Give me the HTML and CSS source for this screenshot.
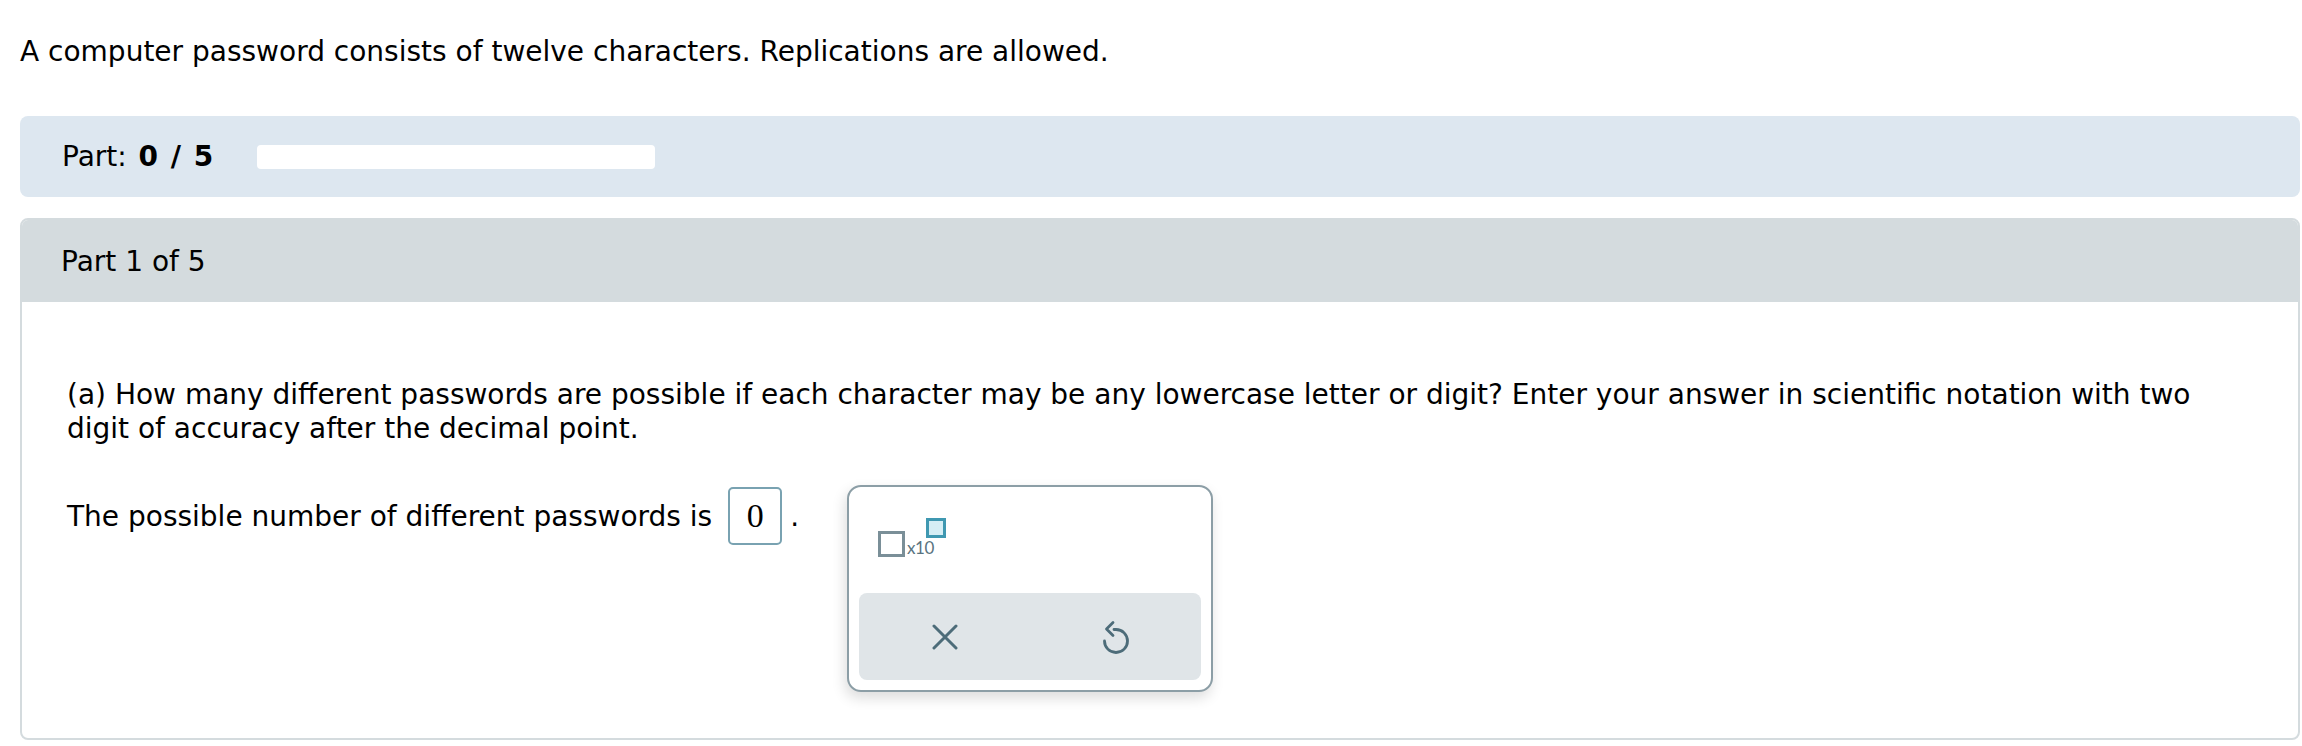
FILE: index.html
```html
<!DOCTYPE html>
<html>
<head>
<meta charset="utf-8">
<link rel="stylesheet" href="styles.css">
</head>
<body>
<div class="page">
  <p class="intro">A computer password consists of twelve characters. Replications are allowed.</p>
  <div class="progress">
    <span class="progress-label">Part: <b>0 / 5</b></span>
    <div class="progress-bar"></div>
  </div>
  <div class="panel">
    <div class="panel-head">Part 1 of 5</div>
    <div class="panel-body">
      <p class="question">(a) How many different passwords are possible if each character may be any lowercase letter or digit? Enter your answer in scientific notation with two digit of accuracy after the decimal point.</p>
      <div class="answer-row">
        <div class="answer-line">
          <span>The possible number of different passwords is</span>
          <span class="answer-box">0</span>
          <span class="period">.</span>
        </div>
        <div class="keypad">
          <div class="keypad-top">
            <span class="sci">
              <span class="sq-big"></span>
              <span class="x10">x10</span>
              <span class="sq-small"></span>
            </span>
          </div>
          <div class="keypad-actions">
            <div class="kbtn">
              <svg width="26" height="26" viewBox="0 0 26 26"><path d="M2 2 L24 24 M24 2 L2 24" stroke="#4d6c79" stroke-width="3" stroke-linecap="round" fill="none"/></svg>
            </div>
            <div class="kbtn">
              <svg width="28" height="34" viewBox="0 0 28 34"><path d="M11 2.5 L4.5 9 L11 15.5" stroke="#4d6c79" stroke-width="2.8" stroke-linecap="round" stroke-linejoin="round" fill="none"/><path d="M12 9.5 H14 A11.5 11.5 0 1 1 2.5 21" stroke="#4d6c79" stroke-width="2.8" stroke-linecap="round" fill="none"/></svg>
            </div>
          </div>
        </div>
      </div>
    </div>
  </div>
</div>
</body>
</html>
```
FILE: styles.css
```css
html, body {
  margin: 0;
  padding: 0;
  background: #ffffff;
}
.page {
  padding: 0 2px 0 20px;
  font-family: "DejaVu Sans", Verdana, sans-serif;
  font-size: 28px;
  color: #000;
}
.intro {
  margin: 0;
  padding-top: 34px;
  line-height: 35px;
}
.progress {
  margin-top: 47px;
  height: 81px;
  background: #dde7f0;
  border-radius: 8px;
  display: flex;
  align-items: center;
  padding-left: 42px;
  gap: 42px;
}
.progress-label {
  width: 153px;
  white-space: nowrap;
  word-spacing: 3px;
}
.progress-label b {
  font-weight: bold;
}
.progress-bar {
  width: 398px;
  height: 24px;
  background: #fff;
  border-radius: 4px;
}
.panel {
  margin-top: 21px;
  height: 522px;
  box-sizing: border-box;
  border: 2px solid #d4dbde;
  border-radius: 8px;
  overflow: hidden;
}
.panel-head {
  height: 82px;
  background: #d4dbde;
  display: flex;
  align-items: center;
  padding-left: 39px;
}
.panel-body {
  padding: 76px 40px 0 45px;
}
.question {
  margin: 0;
  line-height: 34px;
}
.answer-row {
  margin-top: 39px;
  display: flex;
  align-items: flex-start;
}
.answer-line {
  display: flex;
  align-items: center;
  margin-top: 2px;
  height: 58px;
}
.answer-box {
  margin-left: 16px;
  width: 54px;
  height: 58px;
  box-sizing: border-box;
  border: 2px solid #79a2b1;
  border-radius: 5px;
  display: flex;
  align-items: center;
  justify-content: center;
  font-family: "Liberation Serif", "Times New Roman", serif;
  font-size: 34px;
}
.period {
  margin-left: 8px;
}
.keypad {
  margin-left: 48px;
  width: 366px;
  height: 207px;
  box-sizing: border-box;
  border: 2px solid #8c9ea6;
  border-radius: 14px;
  background: #fff;
  box-shadow: -2px 6px 14px rgba(0, 0, 0, 0.14);
  padding: 0 10px 10px 10px;
  display: flex;
  flex-direction: column;
}
.keypad-top {
  height: 106px;
  display: flex;
  align-items: flex-start;
  padding-left: 19px;
  padding-top: 31px;
  box-sizing: border-box;
}
.sci {
  position: relative;
  display: flex;
  align-items: flex-end;
  padding-top: 13px;
}
.sq-big {
  width: 27px;
  height: 26px;
  box-sizing: border-box;
  border: 3px solid #7a8f98;
}
.x10 {
  font-family: Lato, "Open Sans", sans-serif;
  font-size: 17px;
  line-height: 16px;
  color: #597380;
  margin-left: 2px;
  margin-bottom: 1px;
  letter-spacing: -0.5px;
}
.sq-small {
  position: absolute;
  left: 48px;
  top: 0;
  width: 20px;
  height: 20px;
  box-sizing: border-box;
  border: 3px solid #3f98b1;
  background: #d5eef5;
}
.keypad-actions {
  flex: 1;
  background: #e0e5e8;
  border-radius: 8px;
  display: flex;
}
.kbtn {
  flex: 1;
  display: flex;
  align-items: center;
  justify-content: center;
}
```
